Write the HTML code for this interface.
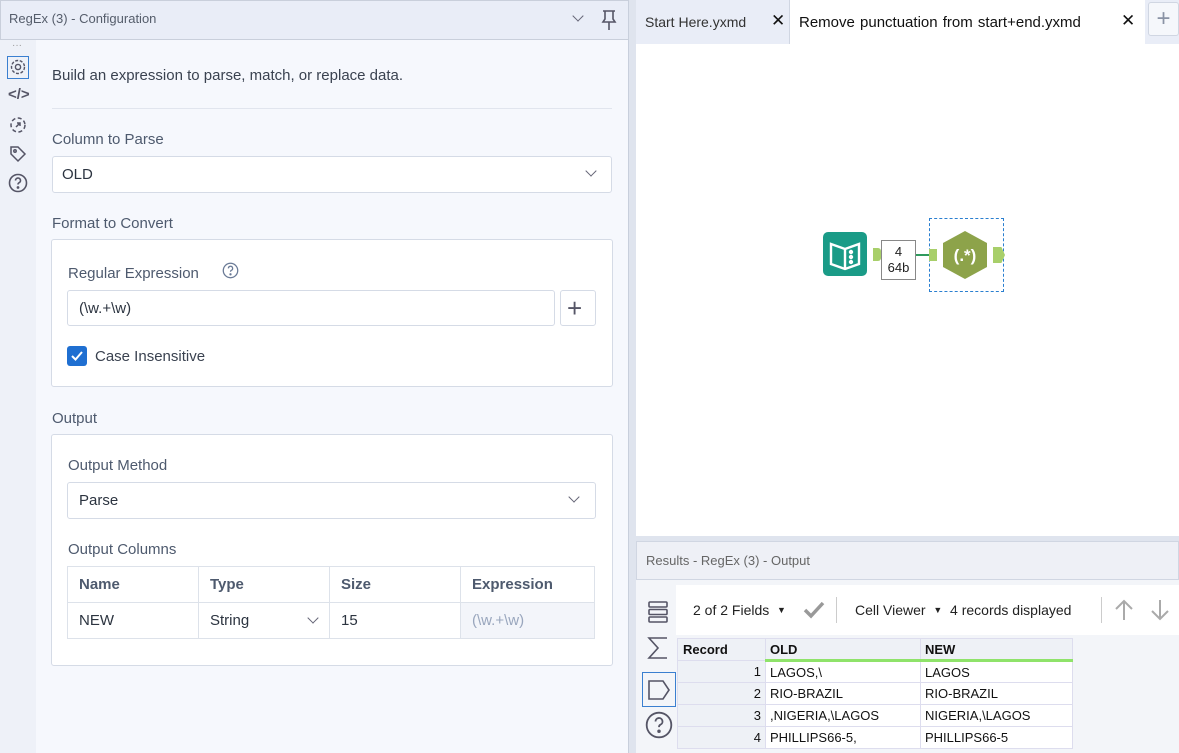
<!DOCTYPE html>
<html><head><meta charset="utf-8"><style>
*{box-sizing:border-box;margin:0;padding:0}
body{width:1179px;height:753px;overflow:hidden;background:#fff;font-family:"Liberation Sans",sans-serif;position:relative;color:#2c3440}
.a{position:absolute}
.lbl{color:#4e5a6e;font-size:15px}
.box{background:#fff;border:1px solid #d5dbe6;border-radius:3px}
.chev{position:absolute;width:8px;height:8px;border-right:1.5px solid #667;border-bottom:1.5px solid #667;transform:rotate(45deg)}
table{border-collapse:collapse}
</style></head><body>
<!-- left header -->
<div class="a" style="left:0;top:0;width:630px;height:40px;background:#e9edf7;border:1px solid #c9cfdb"></div>
<div class="a" style="left:9px;top:11px;font-size:13px;color:#555d6b">RegEx (3) - Configuration</div>
<div class="chev" style="left:574px;top:12px"></div>
<svg class="a" style="left:600px;top:9px" width="18" height="22" viewBox="0 0 18 22" fill="none" stroke="#556" stroke-width="1.6"><path d="M3 2h12M5 2v8l-2 3h12l-2-3V2M9 13v8"/></svg>
<!-- left icon strip -->
<div class="a" style="left:0;top:40px;width:36px;height:713px;background:#eef1f8"></div>
<div class="a" style="left:12px;top:40px;font-size:10px;color:#999">···</div>
<div class="a" style="left:7px;top:56px;width:22px;height:23px;border:1px solid #3a7fd0"></div>
<svg class="a" style="left:9px;top:58px" width="18" height="18" viewBox="0 0 18 18" fill="none" stroke="#556" stroke-width="1.4"><circle cx="9" cy="9" r="2.6"/><circle cx="9" cy="9" r="6.5" stroke-dasharray="3 1.6"/></svg>
<div class="a" style="left:8px;top:86px;font-size:15px;color:#556;font-weight:bold">&lt;/&gt;</div>
<svg class="a" style="left:9px;top:116px" width="18" height="18" viewBox="0 0 18 18" fill="none" stroke="#556" stroke-width="1.5"><circle cx="9" cy="9" r="7" stroke-dasharray="4 2.5"/><path d="M7 11l4-4M8 7h3v3"/></svg>
<svg class="a" style="left:9px;top:145px" width="18" height="18" viewBox="0 0 18 18" fill="none" stroke="#556" stroke-width="1.5"><path d="M2 2h7l7 7-7 7-7-7z"/><circle cx="6" cy="6" r="1.2"/></svg>
<svg class="a" style="left:8px;top:173px" width="20" height="20" viewBox="0 0 20 20" fill="none" stroke="#556" stroke-width="1.6"><circle cx="10" cy="10" r="8.5"/><path d="M7.5 7.5a2.5 2.5 0 1 1 3.5 2.3c-.8.4-1 1-1 1.7"/><circle cx="10" cy="14.5" r=".6" fill="#556"/></svg>
<!-- content -->
<div class="a" style="left:36px;top:40px;width:594px;height:713px;background:#f6f8fd"></div>
<div class="a" style="left:628px;top:0;width:8px;height:753px;background:#dfe4ee;border-left:1px solid #c8cfdc"></div>
<div class="a" style="left:52px;top:67px;font-size:15px;color:#3a4250">Build an expression to parse, match, or replace data.</div>
<div class="a" style="left:52px;top:108px;width:560px;height:1px;background:#e1e5ee"></div>
<div class="a lbl" style="left:52px;top:131px">Column to Parse</div>
<div class="a box" style="left:52px;top:156px;width:560px;height:37px"></div>
<div class="a" style="left:62px;top:166px;font-size:15px">OLD</div>
<div class="chev" style="left:587px;top:167px"></div>
<div class="a lbl" style="left:52px;top:215px">Format to Convert</div>
<div class="a box" style="left:51px;top:239px;width:562px;height:148px"></div>
<div class="a lbl" style="left:68px;top:265px">Regular Expression</div>
<svg class="a" style="left:222px;top:262px" width="17" height="17" viewBox="0 0 20 20" fill="none" stroke="#6a7a96" stroke-width="1.5"><circle cx="10" cy="10" r="8.5"/><path d="M7.5 7.5a2.5 2.5 0 1 1 3.5 2.3c-.8.4-1 1-1 1.7"/><circle cx="10" cy="14.5" r=".6" fill="#6a7a96"/></svg>
<div class="a box" style="left:67px;top:290px;width:488px;height:36px"></div>
<div class="a" style="left:79px;top:300px;font-size:15px">(\w.+\w)</div>
<div class="a box" style="left:560px;top:290px;width:36px;height:36px"></div>
<div class="a" style="left:567px;top:290px;font-size:26px;color:#556;line-height:36px">+</div>
<div class="a" style="left:67px;top:346px;width:20px;height:20px;background:#1f6fd1;border-radius:3px"></div>
<svg class="a" style="left:70px;top:349px" width="14" height="14" viewBox="0 0 14 14"><path d="M2 7l3.5 3.5L12 3" stroke="#fff" stroke-width="2" fill="none"/></svg>
<div class="a" style="left:95px;top:348px;font-size:15px;color:#3a4250">Case Insensitive</div>
<div class="a lbl" style="left:52px;top:410px">Output</div>
<div class="a box" style="left:51px;top:434px;width:562px;height:232px"></div>
<div class="a lbl" style="left:68px;top:457px">Output Method</div>
<div class="a box" style="left:67px;top:482px;width:529px;height:37px"></div>
<div class="a" style="left:79px;top:492px;font-size:15px">Parse</div>
<div class="chev" style="left:570px;top:493px"></div>
<div class="a lbl" style="left:68px;top:541px">Output Columns</div>
<table class="a" style="left:67px;top:566px;width:528px;font-size:15px;background:#fff">
<tr style="height:36px;color:#4e5a6e;font-weight:bold"><td style="border:1px solid #dde2ea;padding-left:11px;width:131px">Name</td><td style="border:1px solid #dde2ea;padding-left:11px;width:131px">Type</td><td style="border:1px solid #dde2ea;padding-left:11px;width:131px">Size</td><td style="border:1px solid #dde2ea;padding-left:11px">Expression</td></tr>
<tr style="height:36px"><td style="border:1px solid #dde2ea;padding-left:11px">NEW</td><td style="border:1px solid #dde2ea;padding-left:11px;position:relative">String<span class="chev" style="left:110px;top:11px"></span></td><td style="border:1px solid #dde2ea;padding-left:11px">15</td><td style="border:1px solid #dde2ea;padding-left:11px;background:#f3f5fa;color:#99a6bd">(\w.+\w)</td></tr>
</table>
<!-- tabs -->
<div class="a" style="left:636px;top:0;width:543px;height:44px;background:#fff"></div>
<div class="a" style="left:636px;top:0;width:154px;height:44px;background:#e9edf7;border-right:1px solid #d0d6e2"></div>
<div class="a" style="left:645px;top:14px;font-size:14px;color:#333">Start Here.yxmd</div>
<div class="a" style="left:771px;top:11px;font-size:17px;color:#111">✕</div>
<div class="a" style="left:799px;top:14px;font-size:15px;color:#111;word-spacing:1px">Remove punctuation from start+end.yxmd</div>
<div class="a" style="left:1121px;top:11px;font-size:17px;color:#111">✕</div>
<div class="a" style="left:1145px;top:0;width:34px;height:44px;background:#e9edf7"></div>
<div class="a" style="left:1148px;top:2px;width:31px;height:34px;border:1px solid #d0d6e2;border-radius:3px;background:#f5f7fb;font-size:24px;color:#8a93a5;text-align:center;line-height:32px">+</div>
<!-- canvas -->
<div class="a" style="left:823px;top:232px;width:44px;height:44px;background:#1a9b87;border-radius:5px"></div>
<svg class="a" style="left:826px;top:236px" width="38" height="36" viewBox="0 0 38 36" fill="none" stroke="#fff" stroke-width="2.4"><path d="M5 8l14 5 14-5v20l-14 5-14-5z M19 13v20"/><circle cx="25" cy="16" r="1" fill="#fff"/><circle cx="25" cy="21" r="1" fill="#fff"/><circle cx="25" cy="26" r="1" fill="#fff"/></svg>
<div class="a" style="left:873px;top:248px;width:8px;height:13px;background:#a8cf6a;border-radius:0 3px 3px 0"></div>
<div class="a" style="left:881px;top:240px;width:35px;height:40px;border:1px solid #888;background:#fff;font-size:13px;text-align:center;line-height:16px;padding-top:3px;color:#222">4<br>64b</div>
<div class="a" style="left:916px;top:254px;width:14px;height:2px;background:#2f9a5d"></div>
<div class="a" style="left:929px;top:218px;width:75px;height:74px;border:1px dashed #2a7fd0"></div>
<div class="a" style="left:929px;top:249px;width:8px;height:12px;background:#a8cf6a"></div>
<svg class="a" style="left:939px;top:230px" width="52" height="50" viewBox="0 0 52 50"><polygon points="26,1 48,13 48,37 26,49 4,37 4,13" fill="#8da34a"/><text x="26" y="31" fill="#fff" font-family="Liberation Sans" font-size="17" font-weight="bold" text-anchor="middle">(.*)</text></svg>
<div class="a" style="left:993px;top:247px;width:12px;height:16px;background:#a8cf6a;clip-path:polygon(0 0,70% 0,100% 50%,70% 100%,0 100%)"></div>
<!-- results -->
<div class="a" style="left:636px;top:536px;width:543px;height:5px;background:#dfe4ee"></div>
<div class="a" style="left:636px;top:541px;width:543px;height:39px;background:#eef0f6;border:1px solid #d0d6e2"></div>
<div class="a" style="left:646px;top:553px;font-size:13px;color:#666">Results - RegEx (3) - Output</div>
<div class="a" style="left:636px;top:580px;width:543px;height:173px;background:#f3f5f9"></div>
<div class="a" style="left:676px;top:585px;width:503px;height:50px;background:#fff"></div>
<svg class="a" style="left:647px;top:600px" width="22" height="24" viewBox="0 0 22 24" fill="none" stroke="#556" stroke-width="1.6"><rect x="2" y="2" width="18" height="5" rx="1"/><rect x="2" y="9.5" width="18" height="5" rx="1"/><rect x="2" y="17" width="18" height="5" rx="1"/></svg>
<svg class="a" style="left:647px;top:636px" width="22" height="24" viewBox="0 0 22 24" fill="none" stroke="#556" stroke-width="1.6"><path d="M20 2H2l9 10-9 10h18"/></svg>
<div class="a" style="left:642px;top:672px;width:34px;height:35px;border:1px solid #3a7fd0"></div>
<svg class="a" style="left:647px;top:678px" width="24" height="24" viewBox="0 0 24 24" fill="none" stroke="#556" stroke-width="1.6"><path d="M2 3h14l6 9-6 9H2z"/></svg>
<svg class="a" style="left:645px;top:711px" width="28" height="28" viewBox="0 0 20 20" fill="none" stroke="#556" stroke-width="1.3"><circle cx="10" cy="10" r="8.8"/><path d="M7.5 7.5a2.5 2.5 0 1 1 3.5 2.3c-.8.4-1 1-1 1.7"/><circle cx="10" cy="14.5" r=".6" fill="#556"/></svg>
<div class="a" style="left:693px;top:602px;font-size:14px;color:#222">2 of 2 Fields &nbsp;<span style="font-size:9px;vertical-align:2px">▼</span></div>
<svg class="a" style="left:803px;top:600px" width="22" height="20" viewBox="0 0 22 20"><path d="M2 10l6 6L20 3" stroke="#999" stroke-width="3.5" fill="none"/></svg>
<div class="a" style="left:836px;top:597px;width:1px;height:26px;background:#ccc"></div>
<div class="a" style="left:855px;top:602px;font-size:14px;color:#222">Cell Viewer &nbsp;<span style="font-size:9px;vertical-align:2px">▼</span> &nbsp;4 records displayed</div>
<div class="a" style="left:1101px;top:597px;width:1px;height:26px;background:#ccc"></div>
<svg class="a" style="left:1114px;top:599px" width="60" height="22" viewBox="0 0 60 22" fill="none" stroke="#aaa" stroke-width="2"><path d="M10 21V2M2 10l8-8 8 8M46 1v19M38 12l8 8 8-8"/></svg>
<table class="a" style="left:677px;top:638px;font-size:13px;color:#111">
<tr style="height:22px;background:#eef1f6;font-weight:bold"><td style="width:88px;padding-left:5px;border:1px solid #dde">Record</td><td style="width:155px;padding-left:4px;border:1px solid #dde;border-bottom:3px solid #8fe36a">OLD</td><td style="width:152px;padding-left:4px;border:1px solid #dde;border-bottom:3px solid #8fe36a">NEW</td></tr>
<tr style="height:22px;background:#fff"><td style="text-align:right;padding-right:4px;background:#eef1f6;border:1px solid #dde">1</td><td style="padding-left:4px;border:1px solid #dde">LAGOS,\</td><td style="padding-left:4px;border:1px solid #dde">LAGOS</td></tr>
<tr style="height:22px;background:#fff"><td style="text-align:right;padding-right:4px;background:#eef1f6;border:1px solid #dde">2</td><td style="padding-left:4px;border:1px solid #dde">RIO-BRAZIL</td><td style="padding-left:4px;border:1px solid #dde">RIO-BRAZIL</td></tr>
<tr style="height:22px;background:#fff"><td style="text-align:right;padding-right:4px;background:#eef1f6;border:1px solid #dde">3</td><td style="padding-left:4px;border:1px solid #dde">,NIGERIA,\LAGOS</td><td style="padding-left:4px;border:1px solid #dde">NIGERIA,\LAGOS</td></tr>
<tr style="height:22px;background:#fff"><td style="text-align:right;padding-right:4px;background:#eef1f6;border:1px solid #dde">4</td><td style="padding-left:4px;border:1px solid #dde">PHILLIPS66-5,</td><td style="padding-left:4px;border:1px solid #dde">PHILLIPS66-5</td></tr>
</table>
</body></html>
